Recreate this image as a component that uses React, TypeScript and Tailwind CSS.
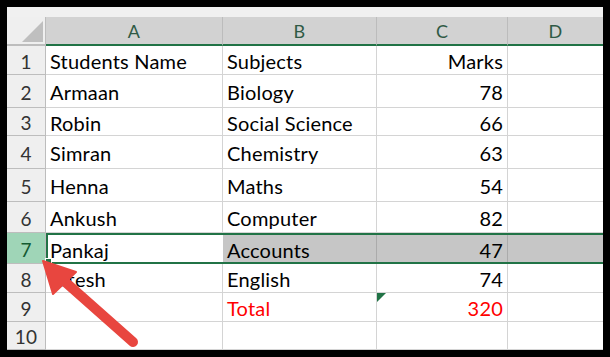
import React from 'react'

// Marks sheet: row 7 selected, arrow pointing at its header

type Row = {
  n: number
  a?: string
  b?: string
  c?: string
  h: string
  red?: boolean
}

const rows: Row[] = [
  { n: 1, a: 'Students Name', b: 'Subjects', c: 'Marks', h: 'h-[29px]' },
  { n: 2, a: 'Armaan', b: 'Biology', c: '78', h: 'h-[33px]' },
  { n: 3, a: 'Robin', b: 'Social Science', c: '66', h: 'h-[28px]' },
  { n: 4, a: 'Simran', b: 'Chemistry', c: '63', h: 'h-[33px]' },
  { n: 5, a: 'Henna', b: 'Maths', c: '54', h: 'h-[33px]' },
  { n: 6, a: 'Ankush', b: 'Computer', c: '82', h: 'h-[31px]' },
]

const after: Row[] = [
  { n: 8, a: 'Ritesh', b: 'English', c: '74', h: 'h-[29px]' },
  { n: 9, b: 'Total', c: '320', h: 'h-[29px]', red: true },
  { n: 10, h: 'h-[28px]' },
]

const grid = 'border-[#d4d4d4]'

function RowHead({ n, active }: { n: number; active?: boolean }) {
  return (
    <div
      className={`w-[39px] shrink-0 flex items-center justify-center pt-[2px] border-r border-b border-[#bdbdbd] text-[19px] ${
        active ? 'bg-[#9fd5b7] text-[#145a32]' : 'bg-[#efefef] text-[#333]'
      }`}
    >
      {n}
    </div>
  )
}

function DataRow({ row }: { row: Row }) {
  const tone = row.red ? 'text-[#ff0000]' : 'text-black'
  return (
    <div className={`flex ${row.h}`}>
      <RowHead n={row.n} />
      <div className={`w-[177px] flex items-center pt-[2px] pl-[4px] border-r border-b ${grid} ${tone}`}>{row.a}</div>
      <div className={`w-[154px] flex items-center pt-[2px] pl-[4px] border-r border-b ${grid} ${tone}`}>{row.b}</div>
      <div className={`relative w-[131px] flex items-center justify-end pt-[2px] pr-[4px] border-r border-b ${grid} ${tone}`}>
        {row.n === 9 && (
          <svg className="absolute left-0 top-0" width="9" height="9" viewBox="0 0 9 9">
            <path d="M0 0H9L0 9Z" fill="#217346" />
          </svg>
        )}
        {row.c}
      </div>
      <div className={`flex-1 border-b ${grid}`} />
    </div>
  )
}

export default function App() {
  return (
    <div className="w-[610px] h-[357px] bg-black p-[7px] overflow-hidden">
      <div className="relative h-[343px] bg-white flex flex-col font-['Lato','Liberation_Sans',sans-serif] text-[20px] tracking-[0.2px] leading-none">
        {/* ribbon edge */}
        <div className="h-[10px] bg-[#f0f0f0]" />

        {/* column letters */}
        <div className="flex h-[29px]">
          <div className="w-[39px] shrink-0 bg-[#efefef] border-r border-b-2 border-[#bdbdbd] relative">
            <svg className="absolute right-[2px] bottom-[2px]" width="21" height="21" viewBox="0 0 21 21">
              <path d="M21 0V21H0Z" fill="#bfbfbf" />
            </svg>
          </div>
          {['A', 'B', 'C', 'D'].map((l, i) => (
            <div
              key={l}
              className={`flex items-center justify-center bg-[#d2d2d2] text-[#2f5a45] text-[18px] border-b-2 border-b-[#217346] ${
                i === 0 ? 'w-[177px]' : i === 1 ? 'w-[154px]' : i === 2 ? 'w-[131px]' : 'flex-1'
              } ${i < 3 ? 'border-r border-r-[#bcbcbc]' : ''}`}
            >
              {l}
            </div>
          ))}
        </div>

        {rows.map((r) => (
          <DataRow key={r.n} row={r} />
        ))}

        {/* selected row 7 */}
        <div className="flex h-[31px]">
          <RowHead n={7} active />
          <div className="flex-1 flex border-y-2 border-l-2 border-[#217346]">
            <div className="w-[175px] flex items-center pt-[2px] pl-[2px] bg-white">Pankaj</div>
            <div className="w-[154px] flex items-center pt-[2px] pl-[4px] bg-[#c6c6c6] border-r border-[#ababab]">Accounts</div>
            <div className="w-[131px] flex items-center justify-end pt-[2px] pr-[4px] bg-[#c6c6c6] border-r border-[#ababab]">47</div>
            <div className="flex-1 bg-[#c6c6c6]" />
          </div>
        </div>

        {after.map((r) => (
          <DataRow key={r.n} row={r} />
        ))}

        {/* fill handle */}
        <div className="absolute left-[38px] top-[251px] w-[7px] h-[7px] bg-[#217346] border border-white" />

        {/* callout arrow */}
        <svg className="absolute left-0 top-0 pointer-events-none" width="596" height="343" viewBox="7 7 596 343">
          <line x1="133" y1="342" x2="63" y2="280" stroke="#e8463f" strokeWidth="10" strokeLinecap="round" />
          <path d="M43 261 L76 272 L53 294 Z" fill="#e8463f" stroke="#e8463f" strokeWidth="2" strokeLinejoin="round" />
        </svg>
      </div>
    </div>
  )
}
